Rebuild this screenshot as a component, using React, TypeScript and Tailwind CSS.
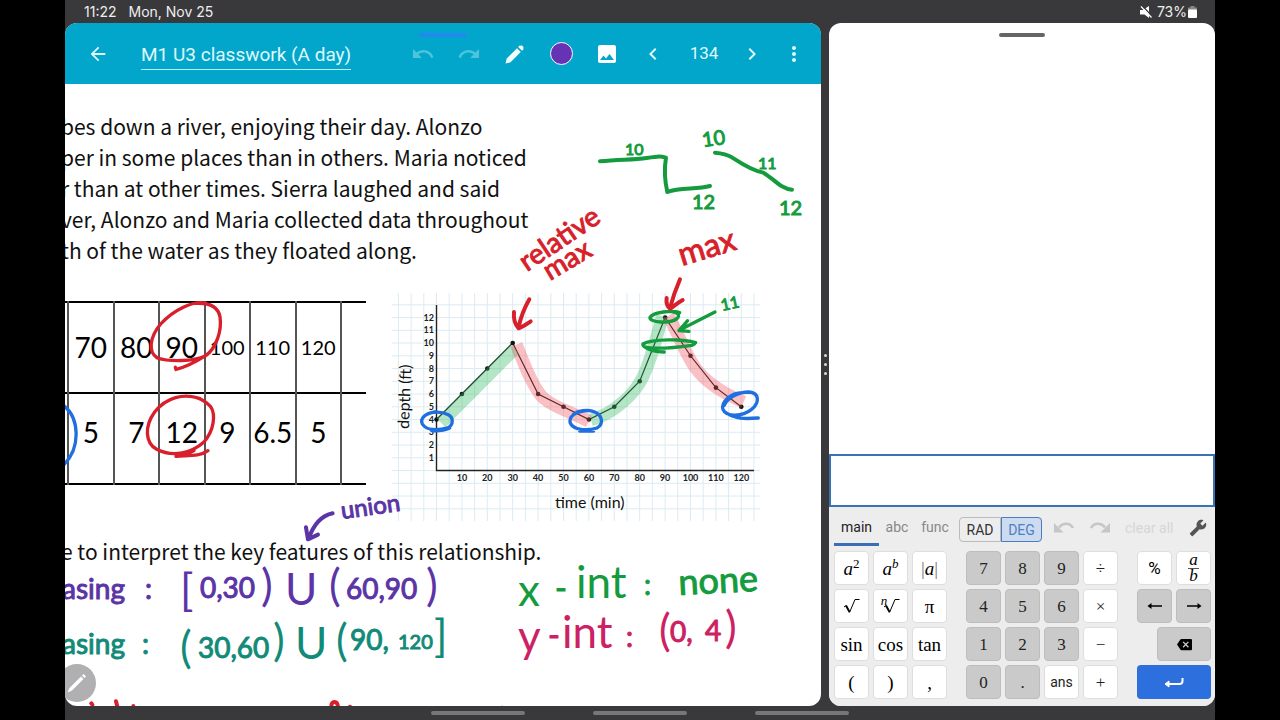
import React, { useState } from 'react';
import { MdArrowBack, MdUndo, MdRedo, MdImage, MdChevronLeft, MdChevronRight, MdMoreVert, MdBackspace, MdBuild } from 'react-icons/md';

const times = ['70', '80', '90', '100', '110', '120'];
const depths = ['5', '7', '12', '9', '6.5', '5'];
const readings = [4, 6, 8, 10, 6, 5, 4, 5, 7, 12, 9, 6.5, 5];

const GREEN = '#149b3d';
const RED = '#d81f2c';
const BLUE = '#1f6fe0';
const PURPLE = '#5b34a6';
const TEAL = '#128a78';
const PINK = '#cc2163';

const chartX = (minutes: number) => 44.5 + minutes * 2.54;
const chartY = (depth: number) => 177.5 - depth * 12.75;

const DepthChart: React.FC = () => (
    <svg width="371" height="228" viewBox="0 0 371 228" className="shrink-0" fontFamily="Lato, sans-serif">
        <g stroke="#dcebf3" strokeWidth="1">
            {Array.from({ length: 29 }, (_, i) => (
                <line key={`v${i}`} x1={6.4 + i * 12.7} x2={6.4 + i * 12.7} y1="0" y2="228" />
            ))}
            {Array.from({ length: 17 }, (_, i) => (
                <line key={`h${i}`} x1="0" x2="368" y1={11.8 + i * 12.75} y2={11.8 + i * 12.75} />
            ))}
        </g>
        <path d="M44.5 12V177.5H362" fill="none" stroke="#222" strokeWidth="1.4" />
        <polyline
            points={readings.map((d, i) => `${chartX(i * 10)},${chartY(d)}`).join(' ')}
            fill="none"
            stroke="#111"
            strokeWidth="1.2"
        />
        {readings.map((d, i) => (
            <circle key={i} cx={chartX(i * 10)} cy={chartY(d)} r="2.3" fill="#111" />
        ))}
        <g fontSize="9" fontWeight="700" fill="#222">
            {Array.from({ length: 12 }, (_, i) => (
                <text key={`y${i}`} x="42" y={chartY(i + 1) + 3} textAnchor="end">{i + 1}</text>
            ))}
            {Array.from({ length: 12 }, (_, i) => (
                <text key={`x${i}`} x={chartX((i + 1) * 10)} y="188" textAnchor="middle">{(i + 1) * 10}</text>
            ))}
        </g>
        <g fontSize="16" fill="#111">
            <text x="163" y="215">time (min)</text>
            <text transform="translate(17 136) rotate(-88)">depth (ft)</text>
        </g>
    </svg>
);

type Note = { t: string; x: number; y: number; size: number; color: string; turn?: number };

const notes: Note[] = [
    { t: 'asing', x: 62, y: 599, size: 28, color: PURPLE },
    { t: ':', x: 145, y: 599, size: 28, color: PURPLE },
    { t: '[', x: 180, y: 606, size: 44, color: PURPLE },
    { t: '0,30', x: 200, y: 598, size: 28, color: PURPLE },
    { t: ')', x: 261, y: 601, size: 44, color: PURPLE },
    { t: 'U', x: 285, y: 605, size: 44, color: PURPLE },
    { t: '(', x: 329, y: 601, size: 44, color: PURPLE },
    { t: '60,90', x: 346, y: 599, size: 28, color: PURPLE },
    { t: ')', x: 426, y: 601, size: 44, color: PURPLE },
    { t: 'asing', x: 62, y: 654, size: 28, color: TEAL },
    { t: ':', x: 142, y: 654, size: 28, color: TEAL },
    { t: '(', x: 180, y: 663, size: 44, color: TEAL },
    { t: '30,60', x: 198, y: 658, size: 28, color: TEAL },
    { t: ')', x: 273, y: 656, size: 44, color: TEAL },
    { t: 'U', x: 295, y: 659, size: 44, color: TEAL },
    { t: '(', x: 336, y: 656, size: 44, color: TEAL },
    { t: '90,', x: 350, y: 650, size: 28, color: TEAL },
    { t: '120', x: 398, y: 649, size: 20, color: TEAL },
    { t: ']', x: 434, y: 652, size: 44, color: TEAL },
    { t: 'x', x: 518, y: 606, size: 44, color: GREEN },
    { t: '-', x: 555, y: 600, size: 32, color: GREEN },
    { t: 'int', x: 576, y: 598, size: 44, color: GREEN },
    { t: ':', x: 644, y: 595, size: 28, color: GREEN },
    { t: 'none', x: 679, y: 595, size: 36, color: GREEN, turn: -3 },
    { t: 'y', x: 518, y: 652, size: 44, color: PINK },
    { t: '-', x: 548, y: 647, size: 32, color: PINK },
    { t: 'int', x: 562, y: 648, size: 44, color: PINK },
    { t: ':', x: 626, y: 647, size: 28, color: PINK },
    { t: '(', x: 659, y: 646, size: 44, color: PINK },
    { t: '0,', x: 670, y: 642, size: 28, color: PINK },
    { t: '4', x: 705, y: 641, size: 28, color: PINK },
    { t: ')', x: 725, y: 643, size: 44, color: PINK },
    { t: 'union', x: 342, y: 519, size: 24, color: PURPLE, turn: -8 },
    { t: 'relative', x: 527, y: 272, size: 28, color: RED, turn: -34 },
    { t: 'max', x: 550, y: 281, size: 28, color: RED, turn: -31 },
    { t: 'max', x: 682, y: 266, size: 32, color: RED, turn: -17 },
    { t: '10', x: 625, y: 155, size: 16, color: GREEN },
    { t: '12', x: 692, y: 209, size: 20, color: GREEN },
    { t: '10', x: 703, y: 147, size: 20, color: GREEN, turn: -8 },
    { t: '11', x: 758, y: 169, size: 16, color: GREEN },
    { t: '12', x: 779, y: 215, size: 20, color: GREEN },
    { t: '11', x: 722, y: 311, size: 16, color: GREEN, turn: -12 },
];

// Everything the pen and the highlighter put on top of the page
const InkLayer: React.FC = () => (
    <svg width="756" height="622" viewBox="65 84 756 622" className="absolute left-0 top-0 pointer-events-none" fontFamily="Lato, sans-serif">
        <g transform="translate(385 280) scale(.3333)" fill="none" strokeWidth="38" strokeLinejoin="round">
            <path d="M168 428L390 206" stroke="#39bd66" strokeOpacity=".38" />
            <path d="M394 194C420 260 440 310 466 344S560 396 612 424" stroke="#f0505a" strokeOpacity=".36" />
            <path d="M618 420C690 400 750 340 774 290S810 190 832 108" stroke="#39bd66" strokeOpacity=".38" />
            <path d="M850 108C880 160 900 220 930 262S1010 338 1076 366" stroke="#f0505a" strokeOpacity=".36" />
        </g>
        <g transform="translate(385 280) scale(.3333)" fill="none" strokeWidth="10" strokeLinecap="round" strokeLinejoin="round">
            <g stroke={BLUE}>
                <path d="M150 396C120 400 104 416 112 432C124 452 158 452 188 444C206 436 206 412 190 404C170 394 140 394 124 404M140 452C165 453 180 451 194 444" />
                <path d="M612 392C572 392 550 410 556 430C566 450 604 454 636 444C658 432 652 402 624 394C606 388 580 392 566 402M584 453H626" />
                <path d="M1076 338C1036 336 1008 368 1014 388C1024 412 1072 410 1100 388C1126 366 1122 338 1092 336C1062 336 1026 352 1018 376M1020 396C1050 418 1080 417 1120 414" />
            </g>
            <g stroke={GREEN}>
                <path d="M884 98C862 90 806 96 795 112C792 128 856 132 876 116C888 104 876 96 852 94" />
                <path d="M932 188C900 176 800 176 774 192C766 210 850 206 920 196C944 188 920 182 870 180M778 200C796 214 815 216 838 216" />
                <path d="M990 96L884 150M908 122L882 152L912 154" />
            </g>
        </g>
        <g transform="translate(60 280) scale(.3333)" fill="none" strokeWidth="10" strokeLinecap="round">
            <g stroke={RED}>
                <path d="M438 70C400 60 340 90 302 132C268 172 264 216 292 234C330 246 400 244 436 228C470 204 486 150 480 110C474 82 450 68 410 70M442 224C410 244 380 262 348 268L346 262" />
                <path d="M420 356C372 338 318 352 284 396C252 440 256 490 290 508C340 534 396 518 432 486C462 452 468 404 452 380C436 362 410 350 390 349M348 529C384 526 420 530 444 512M360 528C380 524 392 518 402 512" />
            </g>
            <path d="M10 376C56 410 66 500 10 556" stroke={BLUE} />
        </g>
        <g transform="translate(500 110) scale(.3333)" fill="none" strokeWidth="12" strokeLinecap="round" strokeLinejoin="round">
            <g stroke={GREEN}>
                <path d="M300 154C360 148 400 150 440 144S480 138 498 143C492 180 496 220 502 246C540 230 590 240 630 228" />
                <path d="M645 128C670 130 680 132 696 142S750 180 790 188C820 204 840 236 876 239" />
            </g>
            <g stroke={RED}>
                <path d="M88 568C72 596 62 622 56 652M42 606C40 626 44 642 56 655C70 650 80 642 92 634" />
                <path d="M540 508C528 536 518 564 510 594M500 564C498 580 502 590 510 596C522 588 534 578 548 570" />
            </g>
        </g>
        <g transform="translate(60 490) scale(.3333)" fill="none" strokeWidth="12" strokeLinecap="round" strokeLinejoin="round">
            <path d="M818 70C780 78 760 106 746 146M738 112L744 148L774 134" stroke={PURPLE} />
            <path d="M94 640L97 644M168 634L172 650M220 648V652M814 650C814 632 832 630 834 650M870 650V654M1326 653V656" stroke={RED} />
        </g>
        {notes.map((n, i) => (
            <text
                key={i}
                transform={`translate(${n.x} ${n.y}) rotate(${n.turn ?? 0})`}
                fontSize={n.size}
                fill={n.color}
                stroke={n.color}
                strokeWidth={n.size > 40 ? 0 : 1}
                strokeLinejoin="round"
            >
                {n.t}
            </text>
        ))}
    </svg>
);

const bar = 'flex h-12 w-[46px] items-center justify-center';

const NotePanel: React.FC = () => (
    <section className="relative flex min-w-0 flex-1 flex-col overflow-hidden rounded-xl bg-white">
        <header className="relative flex h-[61px] items-center bg-[#03a6cb] pr-[5px] text-[#dff8fc]">
            <span className="absolute left-1/2 top-[10px] h-1 w-12 -translate-x-1/2 rounded-full bg-[#2489ee]" />
            <button aria-label="Back" className="flex w-[66px] justify-center"><MdArrowBack size={22} /></button>
            <button className="ml-[10px] whitespace-nowrap border-b border-[#bdeef7] pt-1 font-['Roboto',sans-serif] text-[19px] leading-7">M1 U3 classwork (A day)</button>
            <div className="ml-auto flex items-center">
                <button aria-label="Undo" className={`${bar} text-[#4fc3dc]`}><MdUndo size={24} /></button>
                <button aria-label="Redo" className={`${bar} text-[#4fc3dc]`}><MdRedo size={24} /></button>
                <button aria-label="Pen" className={bar}>
                    <svg width="20" height="20" viewBox="0 0 20 20" fill="#f2feff">
                        <path d="M.5 19.5l1.2-5L12 4.2l3.8 3.8L5.5 18.3zM13.2 3l1.4-1.4q.4-.4.8 0l.5.5.8-.8 2 2-.8.8.5.5q.4.4 0 .8L17 6.8z" />
                    </svg>
                </button>
                <button aria-label="Pen colour" className={bar}>
                    <span className="size-[23px] rounded-full border border-white bg-[#6633b5]" />
                </button>
                <button aria-label="Insert image" className={`${bar} text-white`}><MdImage size={24} /></button>
                <button aria-label="Previous page" className={bar}><MdChevronLeft size={24} /></button>
                <span className="w-14 text-center font-['Roboto',sans-serif] text-[17px]">134</span>
                <button aria-label="Next page" className="flex w-10 justify-center"><MdChevronRight size={24} /></button>
                <button aria-label="More" className="flex w-11 justify-center"><MdMoreVert size={24} /></button>
            </div>
        </header>

        <div className="relative flex-1 pt-[27px] font-['Noto_Sans_CJK_SC','Noto_Sans',sans-serif] text-[21px] leading-[31px] text-[#111]">
            <p className="-ml-1 whitespace-nowrap">
                bes down a river, enjoying their day. Alonzo<br />
                per in some places than in others. Maria noticed<br />
                r than at other times. Sierra laughed and said<br />
                ver, Alonzo and Maria collected data throughout<br />
                th of the water as they floated along.
            </p>
            <div className="mt-[27px] flex items-start gap-[26px]">
                <table className="mt-2 w-[301px] shrink-0 table-fixed border-collapse border-y-2 border-black font-['Lato',sans-serif] text-black">
                    <tbody>
                        {[times, depths].map((row, r) => (
                            <tr key={r} className="h-[91px] border-b-2 border-black">
                                <td className="w-[3px] border-r-2 border-[#555]" />
                                {row.map((value, i) => (
                                    <td
                                        key={i}
                                        className={`border-r-2 border-[#555] p-0 text-center ${r === 1 ? 'pb-3' : ''} ${value.length > 2 && r === 0 ? 'text-[20px]' : 'text-[28px]'}`}
                                    >
                                        {value}
                                    </td>
                                ))}
                                <td className="w-[25px]" />
                            </tr>
                        ))}
                    </tbody>
                </table>
                <DepthChart />
            </div>
            <p className="-ml-1 mt-[15px] whitespace-nowrap">e to interpret the key features of this relationship.</p>
            <InkLayer />
            <button aria-label="Stylus" className="absolute -left-[7px] bottom-1 flex size-[38px] items-center justify-center rounded-full bg-[#b0b0b2] text-white">
                <svg width="22" height="22" viewBox="0 0 22 22" fill="#fff"><path d="M1.500 20.500l2-4.500L15 4.500l2.500 2.500L6 18.500zM16 3.500l1.500-1.500 2.500 2.500L18.500 6z" /></svg>
            </button>
        </div>
    </section>
);

const Key: React.FC<{ children: React.ReactNode; gray?: boolean; label?: string }> = ({ children, gray, label }) => (
    <button
        aria-label={label}
        className={`flex h-[34px] items-center justify-center rounded-sm border ${gray ? 'border-[#bdbdbd] bg-[#cacaca]' : 'border-[#dedede] bg-white'}`}
    >
        {children}
    </button>
);

const Root: React.FC = () => (
    <svg width="17" height="16" viewBox="0 0 17 16" fill="none" stroke="#000">
        <path d="M1 9l2-1.5" />
        <path d="M3 7.5L6.5 14" strokeWidth="1.9" />
        <path d="M6.5 14.5L12 1.5H16.5" />
    </svg>
);

const Arrow: React.FC<{ flip?: boolean }> = ({ flip }) => (
    <svg width="16" height="8" viewBox="0 0 16 8" className={flip ? 'rotate-180' : ''}>
        <path d="M2 4H15" stroke="#000" strokeWidth="1.6" />
        <path d="M.5 4L4.500 1V7z" fill="#000" />
    </svg>
);

const Bent: React.FC<{ flip?: boolean }> = ({ flip }) => (
    <svg width="20" height="13" viewBox="0 0 20 13" className={flip ? '-scale-x-100' : ''}>
        <path d="M0 2l9.5 9.5H0z" fill="#c6c6c6" />
        <path d="M5 6.500C9 1.500 16 1.500 19 7" fill="none" stroke="#c6c6c6" strokeWidth="2.6" />
    </svg>
);

const CalculatorPanel: React.FC = () => {
    const [expression, setExpression] = useState('');

    return (
        <section className="relative flex w-[386px] shrink-0 flex-col overflow-hidden rounded-xl bg-white font-['Roboto',sans-serif]">
            <span className="absolute left-1/2 top-[10px] h-1 w-[46px] -translate-x-1/2 rounded-full bg-[#666]" />
            <div className="flex-1" />
            <input
                aria-label="Expression"
                value={expression}
                onChange={(e) => setExpression(e.target.value)}
                className="h-[53px] w-full border-2 border-[#3a72b8] bg-white px-3 text-xl outline-none"
            />
            <div className="bg-[#ededed] pb-[7px] pl-[5px] pr-1">
                <div className="flex h-[44px] items-start text-sm text-[#888]">
                    <button className="h-[39px] w-[45px] border-b-[3px] border-[#3c6cb4] pt-1 text-[#222]">main</button>
                    <button className="h-[39px] w-9 pt-px">abc</button>
                    <button className="h-[39px] w-10 pt-px">func</button>
                    <div className="ml-1 mt-[10px] flex h-[25px] text-[#333]">
                        <button className="w-[42px] rounded-l border border-[#bbb]">RAD</button>
                        <button className="w-[41px] rounded-r border border-[#4a7cc4] bg-[#cddbf0] text-[#4f7fc4]">DEG</button>
                    </div>
                    <div className="flex h-[41px] flex-1 items-center justify-between pl-3 pr-1 text-[#d6d6d6]">
                        <button aria-label="Undo"><Bent /></button>
                        <button aria-label="Redo"><Bent flip /></button>
                        <button>clear all</button>
                        <button aria-label="Settings" className="text-[#555]"><MdBuild size={18} className="-scale-x-100" /></button>
                    </div>
                </div>
                <div className="flex justify-between font-['Liberation_Serif',serif] text-[19px] leading-none text-black">
                    <div className="grid w-[113px] grid-cols-3 gap-1">
                        <Key><i>a<sup className="text-[13px] not-italic">2</sup></i></Key>
                        <Key><i>a<sup className="text-[13px]">b</sup></i></Key>
                        <Key><span className="text-[#777]">|</span><i>a</i><span className="text-[#777]">|</span></Key>
                        <Key label="square root"><Root /></Key>
                        <Key label="nth root"><i className="-mr-1 -mt-3 text-[13px]">n</i><Root /></Key>
                        <Key>π</Key>
                        <Key>sin</Key>
                        <Key>cos</Key>
                        <Key>tan</Key>
                        <Key>(</Key>
                        <Key>)</Key>
                        <Key>,</Key>
                    </div>
                    <div className="grid w-[152px] grid-cols-4 gap-1 text-[17px] text-[#222]">
                        <Key gray>7</Key>
                        <Key gray>8</Key>
                        <Key gray>9</Key>
                        <Key>÷</Key>
                        <Key gray>4</Key>
                        <Key gray>5</Key>
                        <Key gray>6</Key>
                        <Key>×</Key>
                        <Key gray>1</Key>
                        <Key gray>2</Key>
                        <Key gray>3</Key>
                        <Key>−</Key>
                        <Key gray>0</Key>
                        <Key gray>.</Key>
                        <Key><span className="font-['Roboto',sans-serif] text-sm">ans</span></Key>
                        <Key>+</Key>
                    </div>
                    <div className="flex w-[74px] flex-col gap-1">
                        <div className="grid grid-cols-2 gap-1">
                            <Key><span className="font-['Roboto',sans-serif] text-[17px]">%</span></Key>
                            <Key label="fraction">
                                <i className="flex flex-col items-center text-[17px] leading-[14px]">
                                    <span className="border-b border-[#555] px-px pb-px">a</span>
                                    <span>b</span>
                                </i>
                            </Key>
                            <Key gray label="left"><Arrow /></Key>
                            <Key gray label="right"><Arrow flip /></Key>
                        </div>
                        <div className="grid pl-5">
                            <Key gray label="delete"><MdBackspace size={15} /></Key>
                        </div>
                        <button aria-label="Enter" className="flex h-[34px] items-center justify-center rounded-sm bg-[#2d70dd]">
                            <svg width="20" height="11" viewBox="0 0 20 11" fill="none" stroke="#fff" strokeWidth="2">
                                <path d="M18.5 1V4Q18.5 7 15.5 7H3" />
                                <path d="M1 7l4-3v6z" fill="#fff" strokeWidth="1" />
                            </svg>
                        </button>
                    </div>
                </div>
            </div>
        </section>
    );
};

const App: React.FC = () => {
    return (
        <div className="min-h-screen bg-black px-[65px]">
            <div className="flex min-h-screen flex-col bg-[#39393b]">
                <div className="flex h-[23px] items-center justify-between pl-[19px] pr-[18px] font-['Inter',sans-serif] text-sm text-[#eee]">
                    <div className="flex gap-3">
                        <span>11:22</span>
                        <span>Mon, Nov 25</span>
                    </div>
                    <div className="flex items-center">
                        {/* muted speaker */}
                        <svg width="12" height="12" viewBox="0 0 12 12" className="mr-[5px]" fill="#fff">
                            <path d="M0 4h3l1.500-1L9 8v4L4.500 8.500H0zM5.500 2.200L9 0v6z" />
                            <path d="M1 .5l10.500 11" stroke="#fff" strokeWidth="1.2" />
                        </svg>
                        <span>73%</span>
                        <svg width="9" height="12" viewBox="0 0 9 12" className="ml-px">
                            <path d="M2.500 0h4v1.500H9V4H0V1.500h2.500z" fill="#888" />
                            <rect y="3.5" width="9" height="8.5" rx="1" fill="#fff" />
                        </svg>
                    </div>
                </div>
                <main className="flex flex-1">
                    <NotePanel />
                    <div className="flex w-2 flex-col items-center justify-center gap-[6px]">
                        <span className="size-[3px] rounded-full bg-[#ddd]" />
                        <span className="size-[3px] rounded-full bg-[#ddd]" />
                        <span className="size-[3px] rounded-full bg-[#ddd]" />
                    </div>
                    <CalculatorPanel />
                </main>
                <div className="flex h-[14px] items-center justify-center gap-[68px]">
                    <span className="h-1 w-[94px] rounded-full bg-[#77777a]" />
                    <span className="h-1 w-[94px] rounded-full bg-[#77777a]" />
                    <span className="h-1 w-[94px] rounded-full bg-[#77777a]" />
                </div>
            </div>
        </div>
    );
};

export default App;
